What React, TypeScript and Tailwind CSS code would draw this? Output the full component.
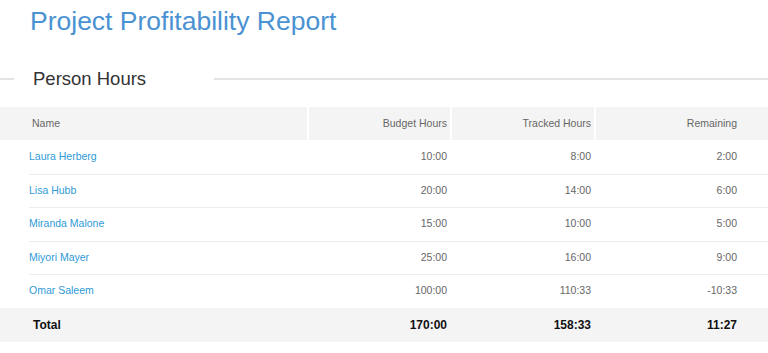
type Row = { name: string; budget: string; tracked: string; remaining: string };

const rows: Row[] = [
  { name: "Laura Herberg", budget: "10:00", tracked: "8:00", remaining: "2:00" },
  { name: "Lisa Hubb", budget: "20:00", tracked: "14:00", remaining: "6:00" },
  { name: "Miranda Malone", budget: "15:00", tracked: "10:00", remaining: "5:00" },
  { name: "Miyori Mayer", budget: "25:00", tracked: "16:00", remaining: "9:00" },
  { name: "Omar Saleem", budget: "100:00", tracked: "110:33", remaining: "-10:33" },
];

export default function App() {
  return (
    <div className="w-[768px] h-[353px] bg-white overflow-hidden font-['Liberation_Sans',Arial,sans-serif]">
      <h1 className="pt-[6px] pl-[30px] text-[26.5px] leading-[30px] text-[#4a92d2]">
        Project Profitability Report
      </h1>

      {/* section heading with rule on both sides */}
      <div className="mt-[32px] flex items-center">
        <div className="w-[14px] h-[2px] bg-[#e4e4e4]" />
        <h2 className="w-[200px] pl-[19px] text-[18.5px] leading-[21px] text-[#333]">
          Person Hours
        </h2>
        <div className="flex-1 h-[2px] bg-[#e4e4e4]" />
      </div>

      <div className="mt-[18px] text-[10.5px]">
        {/* header */}
        <div className="grid grid-cols-[307px_143px_144px_146px_1fr] h-[33px] items-stretch bg-[#f4f4f4] text-[#666]">
          <div className="flex items-center pl-[32px]">Name</div>
          <div className="flex items-center justify-end pr-[3px] border-l-2 border-white">Budget Hours</div>
          <div className="flex items-center justify-end pr-[3px] border-l-2 border-white">Tracked Hours</div>
          <div className="flex items-center justify-end pr-[3px] border-l-2 border-white">Remaining</div>
          <div />
        </div>

        {/* people */}
        <div className="ml-[29px]">
          {rows.map((r, i) => (
            <div
              key={r.name}
              className={`grid grid-cols-[278px_143px_144px_146px_1fr] h-[33.5px] items-center ${
                i > 0 ? "border-t border-[#ececec]" : ""
              }`}
            >
              <div className="text-[#2f9ad6]">{r.name}</div>
              <div className="text-right pr-[3px] text-[#666]">{r.budget}</div>
              <div className="text-right pr-[3px] text-[#666]">{r.tracked}</div>
              <div className="text-right pr-[3px] text-[#666]">{r.remaining}</div>
              <div />
            </div>
          ))}
        </div>

        {/* totals */}
        <div className="grid grid-cols-[307px_143px_144px_146px_1fr] h-[34px] items-center bg-[#f4f4f4] text-[12px] font-bold text-[#111]">
          <div className="pl-[33px]">Total</div>
          <div className="text-right pr-[3px]">170:00</div>
          <div className="text-right pr-[3px]">158:33</div>
          <div className="text-right pr-[3px]">11:27</div>
          <div />
        </div>
      </div>
    </div>
  );
}
